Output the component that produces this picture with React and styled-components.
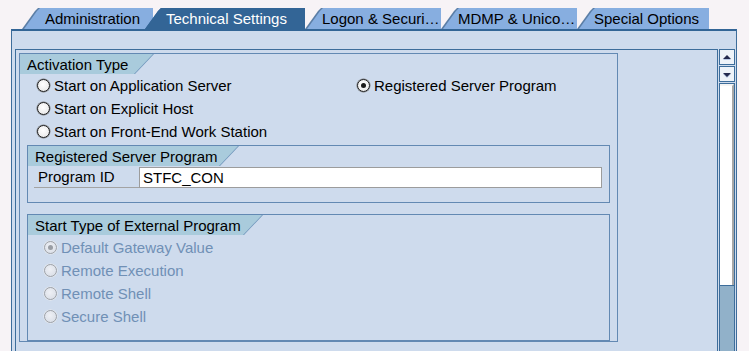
import React from 'react';
import styled, { createGlobalStyle } from 'styled-components';

const Global = createGlobalStyle`
  html, body { margin: 0; padding: 0; background: #f7f3f6; overflow: hidden; }
  body { font-family: "Liberation Sans", Arial, sans-serif; font-size: 15px; color: #000; }
`;

const Page = styled.div`
  width: 749px;
  height: 351px;
  overflow: hidden;
  padding-top: 8px;
  box-sizing: border-box;
`;

const TabBar = styled.div`
  display: flex;
  height: 21px;
  padding-left: 22px;
`;

const Tab = styled.div`
  position: relative;
  box-sizing: border-box;
  flex: 0 0 ${p => p.$w}px;
  height: 21px;
  margin-left: ${p => (p.$active ? -8 : 0)}px;
  z-index: ${p => (p.$active ? 2 : 1)};
  padding-left: ${p => p.$pad}px;
  line-height: 22px;
  white-space: nowrap;
  overflow: hidden;
  color: ${p => (p.$active ? '#ffffff' : '#000000')};
  &::before {
    content: '';
    position: absolute;
    inset: 0;
    background: ${p => (p.$active ? '#336596' : '#5b7ea6')};
    clip-path: polygon(0 100%, 13px 3px, 16px 0, 100% 0, 100% 100%);
  }
  &::after {
    content: '';
    position: absolute;
    inset: 0;
    background: ${p => (p.$active ? '#336596' : '#87aee0')};
    clip-path: polygon(${p => (p.$active ? 0 : 2)}px 100%, ${p => (p.$active ? 13 : 15)}px 3px, ${p => (p.$active ? 16 : 18)}px 0, 100% 0, 100% 100%);
  }
`;

const TabLabel = styled.span`
  position: relative;
  z-index: 1;
`;

const Panel = styled.div`
  margin-left: 11px;
  width: 726px;
  height: 330px;
  box-sizing: border-box;
  background: #cedbed;
  border-top: 2px solid #336596;
  border-left: 1px solid #3d6d9b;
  border-right: 1px solid #3d6d9b;
  padding: 18px 1px 0 3px;
  display: flex;
  gap: 1px;
`;

const ScrollArea = styled.div`
  flex: 0 0 703px;
  box-sizing: border-box;
  border: 1px solid #3d6d9b;
  border-bottom: none;
  padding: 3px 0 0 3px;
`;

const Group = styled.div`
  box-sizing: border-box;
  width: ${p => p.$w}px;
  margin: ${p => p.$m || '0'};
  border: 1px solid #6389b3;
  padding-bottom: ${p => p.$pb || 0}px;
`;

const GroupHeader = styled.div`
  position: relative;
  box-sizing: border-box;
  width: ${p => p.$w}px;
  height: 20px;
  line-height: 21px;
  padding-left: ${p => p.$pad}px;
  white-space: nowrap;
  &::before {
    content: '';
    position: absolute;
    inset: 0;
    background: #6f95bb;
    clip-path: polygon(0 0, 100% 0, calc(100% - 19px) 100%, 0 100%);
  }
  &::after {
    content: '';
    position: absolute;
    inset: 0;
    background: #a9cbdc;
    clip-path: polygon(0 0, calc(100% - 1px) 0, calc(100% - 20px) 100%, 0 100%);
  }
`;

const HeaderText = styled.span`
  position: relative;
  z-index: 1;
`;

const RadioList = styled.div`
  display: flex;
  flex-direction: column;
  padding: ${p => p.$pt || 0}px 0 0 ${p => p.$pl}px;
`;

const RadioRow = styled.div`
  display: flex;
  align-items: center;
  height: 23px;
`;

const RadioItem = styled.label`
  display: flex;
  align-items: center;
  gap: 4px;
  white-space: nowrap;
  flex: 0 0 ${p => (p.$w ? `${p.$w}px` : 'auto')};
  color: ${p => (p.$disabled ? '#7090b6' : '#000')};
`;

const Circle = styled.span`
  position: relative;
  box-sizing: border-box;
  width: 13px;
  height: 13px;
  border-radius: 50%;
  border: 1.5px solid ${p => (p.$disabled ? '#9ea2a8' : '#1e1e1e')};
  background: ${p => (p.$disabled ? 'radial-gradient(circle at 45% 40%, #eef0f5, #d6dbe4)' : 'radial-gradient(circle at 45% 40%, #ffffff, #e4e4e4)')};
  box-shadow: 0 0 0 0.5px ${p => (p.$disabled ? '#f0f0f0' : '#7a7a7a')};
  &::after {
    content: '';
    display: ${p => (p.$checked ? 'block' : 'none')};
    position: absolute;
    left: 50%;
    top: 50%;
    width: 5px;
    height: 5px;
    margin: -2.5px 0 0 -2.5px;
    border-radius: 50%;
    background: ${p => (p.$disabled ? '#999da4' : '#1a1a1a')};
  }
`;

const FieldRow = styled.div`
  display: flex;
  padding-left: 6px;
`;

const FieldLabel = styled.div`
  box-sizing: border-box;
  width: 105px;
  height: 22px;
  line-height: 22px;
  padding-left: 4px;
  border-bottom: 1px solid #a3a3a3;
`;

const FieldInput = styled.div`
  box-sizing: border-box;
  width: 463px;
  height: 21px;
  margin-top: 1px;
  line-height: 20px;
  padding-left: 3px;
  background: #ffffff;
  border: 1px solid #9c9c9c;
`;

const ScrollBar = styled.div`
  flex: 0 0 16px;
  display: flex;
  flex-direction: column;
  gap: 1px;
`;

const ScrollButton = styled.div`
  box-sizing: border-box;
  height: 16px;
  border: 1px solid #3d6d9b;
  background: #eef3f9;
  display: flex;
  align-items: center;
  justify-content: center;
`;

const Track = styled.div`
  flex: 1;
  display: flex;
  flex-direction: column;
  box-sizing: border-box;
  border: 1px solid #3d6d9b;
  border-bottom: none;
  background: #ffffff;
`;

const TrackSpace = styled.div`
  flex: 0 0 201px;
  box-sizing: border-box;
  border-right: 2px solid #a8a8a8;
  border-top: 2px solid #f4f4f4;
`;

const Thumb = styled.div`
  flex: 1;
  background: #91b1c9;
  border-top: 1px solid #3d6d9b;
`;

const Arrow = ({ up }) => (
  <svg width="10" height="7" viewBox="0 0 10 7">
    {up ? (
      <>
        <polygon points="1,6 9,6 5,2" fill="#b8c8e6" />
        <polygon points="1,5 9,5 5,1" fill="#232a4e" />
      </>
    ) : (
      <>
        <polygon points="1,3 9,3 5,7" fill="#b8c8e6" />
        <polygon points="1,2 9,2 5,6" fill="#232a4e" />
      </>
    )}
  </svg>
);

const Radio = ({ label, checked, disabled, w }) => (
  <RadioItem $disabled={disabled} $w={w}>
    <Circle $checked={checked} $disabled={disabled} />
    {label}
  </RadioItem>
);

const tabs = [
  { label: 'Administration', w: 131, pad: 23 },
  { label: 'Technical Settings', w: 160, pad: 21, active: true },
  { label: 'Logon & Securi…', w: 136, pad: 17 },
  { label: 'MDMP & Unico…', w: 136, pad: 17 },
  { label: 'Special Options', w: 132, pad: 17 },
];

export default function App() {
  return (
    <Page>
      <Global />
      <TabBar>
        {tabs.map(t => (
          <Tab key={t.label} $w={t.w} $pad={t.pad} $active={t.active}>
            <TabLabel>{t.label}</TabLabel>
          </Tab>
        ))}
      </TabBar>
      <Panel>
        <ScrollArea>
          <Group $w={599}>
            <GroupHeader $w={134} $pad={7}>
              <HeaderText>Activation Type</HeaderText>
            </GroupHeader>
            <RadioList $pl={17}>
              <RadioRow>
                <Radio label="Start on Application Server" w={320} />
                <Radio label="Registered Server Program" checked />
              </RadioRow>
              <RadioRow>
                <Radio label="Start on Explicit Host" />
              </RadioRow>
              <RadioRow>
                <Radio label="Start on Front-End Work Station" />
              </RadioRow>
            </RadioList>
            <Group $w={583} $m="2px 0 0 7px" $pb={14}>
              <GroupHeader $w={211} $pad={7}>
                <HeaderText>Registered Server Program</HeaderText>
              </GroupHeader>
              <FieldRow>
                <FieldLabel>Program ID</FieldLabel>
                <FieldInput>STFC_CON</FieldInput>
              </FieldRow>
            </Group>
            <Group $w={583} $m="11px 0 0 7px" $pb={12}>
              <GroupHeader $w={235} $pad={7}>
                <HeaderText>Start Type of External Program</HeaderText>
              </GroupHeader>
              <RadioList $pl={16} $pt={1}>
                <RadioRow>
                  <Radio label="Default Gateway Value" checked disabled />
                </RadioRow>
                <RadioRow>
                  <Radio label="Remote Execution" disabled />
                </RadioRow>
                <RadioRow>
                  <Radio label="Remote Shell" disabled />
                </RadioRow>
                <RadioRow>
                  <Radio label="Secure Shell" disabled />
                </RadioRow>
              </RadioList>
            </Group>
          </Group>
        </ScrollArea>
        <ScrollBar>
          <ScrollButton>
            <Arrow up />
          </ScrollButton>
          <ScrollButton>
            <Arrow />
          </ScrollButton>
          <Track>
            <TrackSpace />
            <Thumb />
          </Track>
        </ScrollBar>
      </Panel>
    </Page>
  );
}
